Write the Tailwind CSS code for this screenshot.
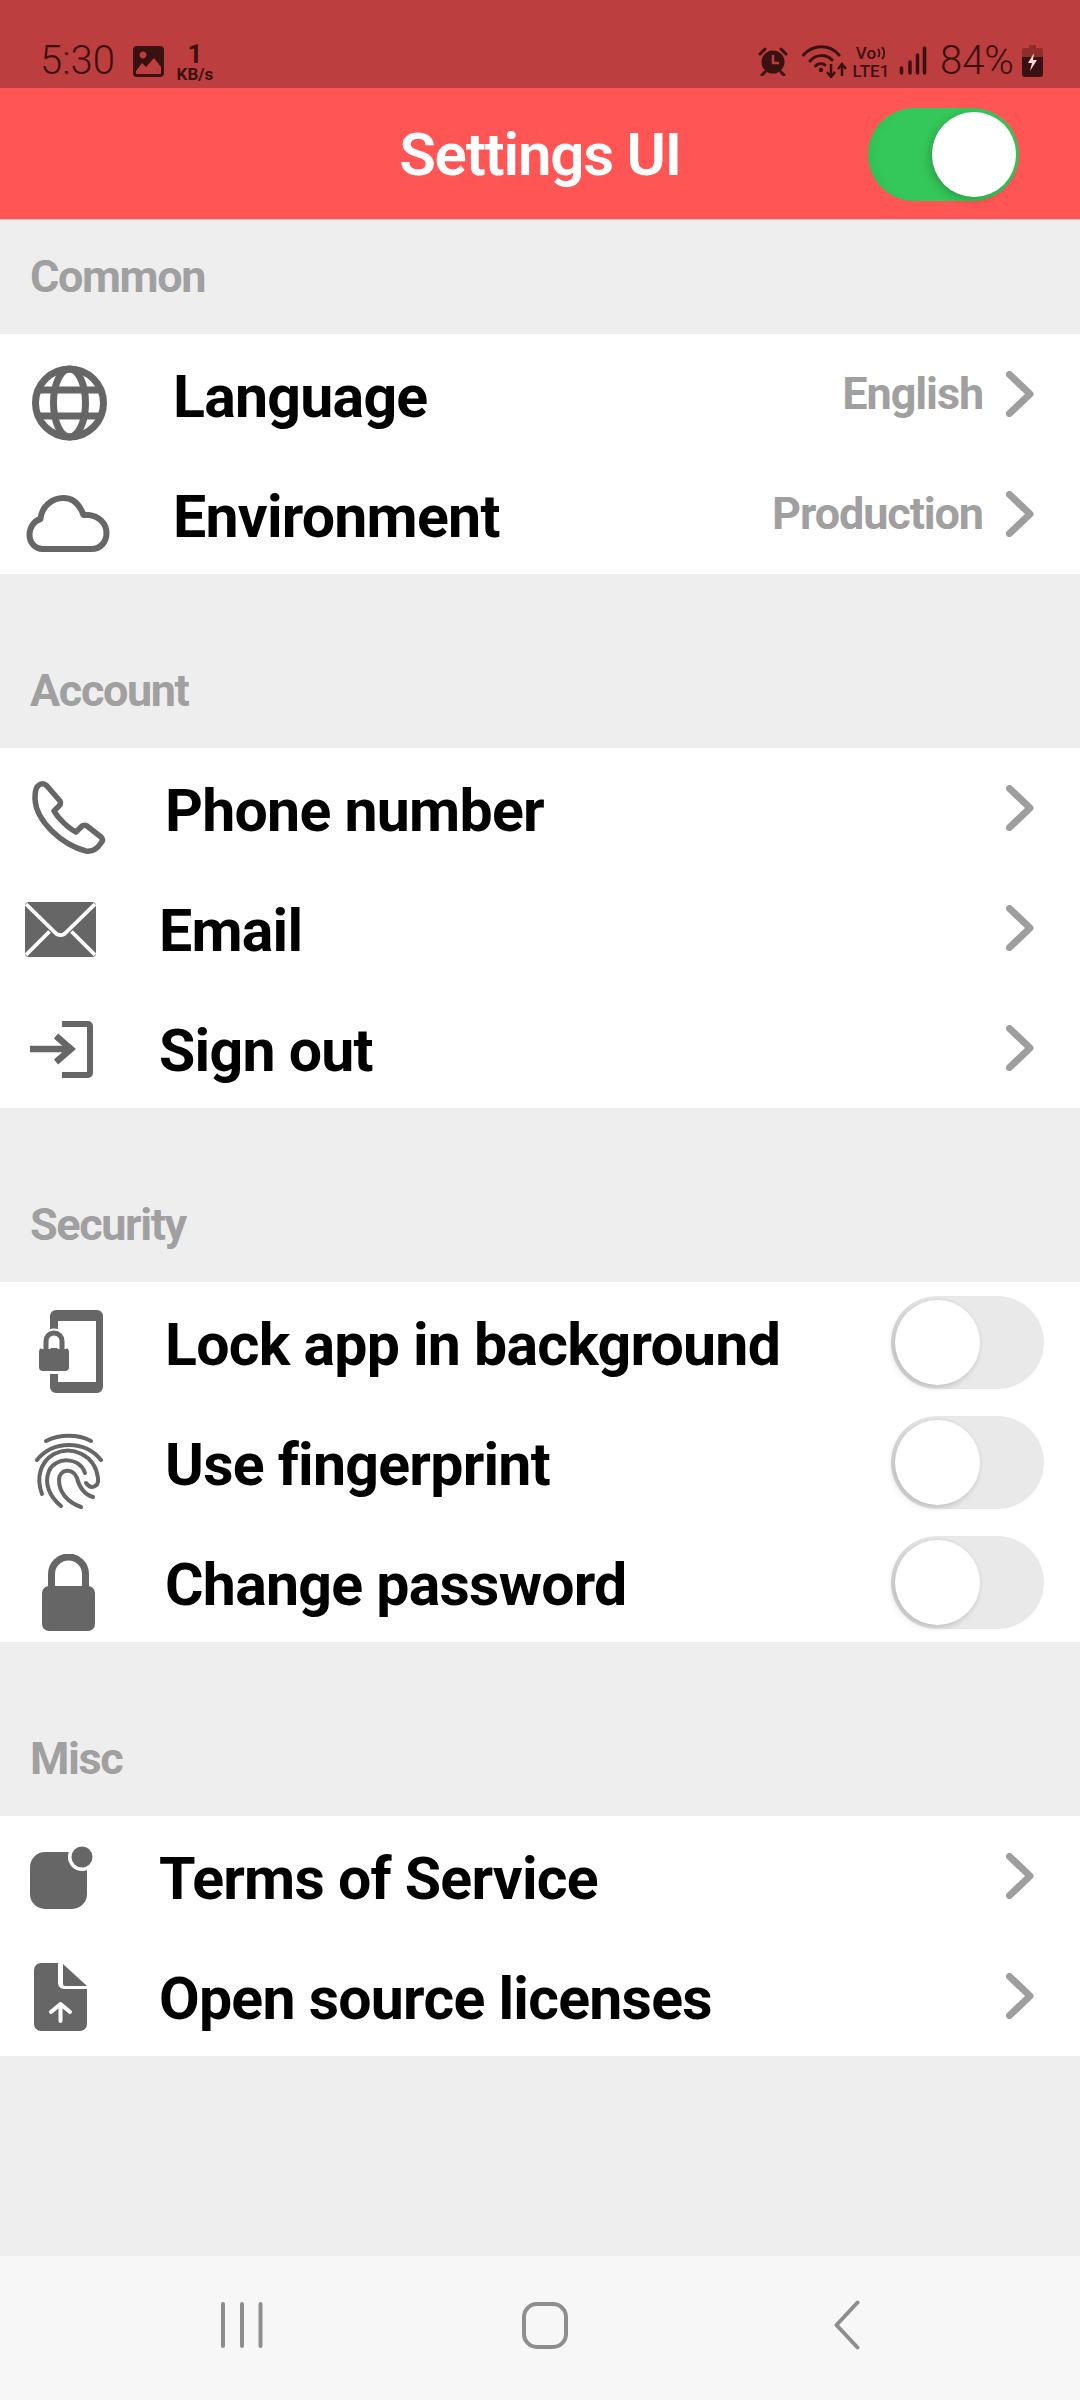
<!DOCTYPE html>
<html>
<head>
<meta charset="utf-8">
<script src="https://cdn.jsdelivr.net/npm/@tailwindcss/browser@4"></script>
</head>
<body class="m-0">
<div class="w-[1080px] h-[2400px] flex flex-col bg-[#eeeeee] font-['Roboto',sans-serif] overflow-hidden">
  <!-- status bar -->
  <div class="h-[88px] shrink-0 bg-[#bd3e3e] flex items-start text-[#3a1111] relative">
    <span class="ml-[40px] mt-[38px] text-[40px] leading-[46px] font-light">5:30</span>
    <svg class="ml-[18px] mt-[46px] block" width="31" height="31" viewBox="0 0 31 31"><path fill="#3a1111" fill-rule="evenodd" d="M4 0H27a4 4 0 0 1 4 4V27a4 4 0 0 1-4 4H4a4 4 0 0 1-4-4V4a4 4 0 0 1 4-4ZM3 25V27a1 1 0 0 0 1 1H27a1 1 0 0 0 1-1V21L21 12 13 21 9 17Z M10 5.500a3.500 3.500 0 1 0 .01 0Z"/></svg>
    <div class="ml-[10px] mt-[42px] w-[42px] flex flex-col items-center">
      <span class="text-[26px] leading-[24px] font-bold">1</span>
      <span class="text-[17px] leading-[17px] font-bold whitespace-nowrap">KB/s</span>
    </div>
    <svg class="ml-[542px] mt-[47px] block" width="30" height="29" viewBox="0 0 30 29"><circle cx="15" cy="15" r="11.500" fill="#3a1111"/><path d="M2 7 7 2M28 7 23 2M7 25 4 28M23 25 26 28" stroke="#3a1111" stroke-width="3" stroke-linecap="round"/><path d="M15 8V16H21" stroke="#bd3e3e" stroke-width="2.500" fill="none"/></svg>
    <svg class="ml-[14px] mt-[44px] block" width="45" height="34" viewBox="0 0 45 34"><g fill="none" stroke="#3a1111" stroke-width="3" stroke-linecap="round"><path d="M1.500 11C11 0 28 0 37 11"/><path d="M8 17C14 10 24 10 30 16"/><path d="M13.500 22C16 19.500 20 19 23 21"/></g><circle cx="19" cy="26" r="2.200" fill="#3a1111"/><path d="M29 20V32M25 28 29 33 33 28M40 32V21M36 25 40 20 44 25" fill="none" stroke="#3a1111" stroke-width="2.500"/></svg>
    <div class="ml-[5px] mt-[44px] w-[38px] flex flex-col items-center">
      <div class="flex items-center h-[17px]"><span class="text-[17px] leading-[16px] font-medium">Vo</span><svg class="block ml-[1px]" width="9" height="14" viewBox="0 0 9 14"><path d="M1 3C3 5 3 9 1 11M5 1C8 4 8 10 5 13" fill="none" stroke="#3a1111" stroke-width="1.800"/></svg></div>
      <span class="text-[17px] leading-[16px] font-medium mt-[2px] whitespace-nowrap">LTE1</span>
    </div>
    <svg class="ml-[9px] mt-[46px] block" width="28" height="29" viewBox="0 0 28 29"><path d="M2.500 22V27M11 16V27M18.500 9V27M25.500 2V27" stroke="#3a1111" stroke-width="3.500" stroke-linecap="round" fill="none"/></svg>
    <span class="ml-[13px] mt-[38px] text-[40px] leading-[46px] font-light whitespace-nowrap">84%</span>
    <svg class="ml-[8px] mt-[45px] block" width="21" height="32" viewBox="0 0 21 32"><path d="M7 0H14V3H19a2 2 0 0 1 2 2V13H0V5a2 2 0 0 1 2-2H7Z" fill="#8f2c2c"/><path d="M0 12H21V29a3 3 0 0 1-3 3H3a3 3 0 0 1-3-3Z" fill="#3a1111"/><path d="M12 8 6 18H10L8 26 15 15H11Z" fill="#f6d6d6"/></svg>
  </div>
  <!-- header -->
  <div class="h-[132px] shrink-0 bg-[#ff5555] border-b border-[#d0c0c0] flex items-center relative">
    <div class="w-full text-center text-white text-[60px] leading-[66px] font-semibold tracking-[-1.2px] mt-[2px]">Settings UI</div>
    <div class="absolute left-[868px] top-[20px] w-[151px] h-[93px] rounded-full bg-[#34c759] shadow-[inset_14px_0_14px_-14px_rgba(0,0,0,0.08)]">
      <div class="absolute left-[64px] top-[4px] w-[84px] h-[85px] rounded-full bg-white shadow-[-3px_3px_8px_rgba(0,0,0,0.18)]"></div>
    </div>
  </div>

  <!-- Common -->
  <div class="h-[114px] shrink-0 pl-[30px] flex items-center text-[#a0a0a0] text-[45px] font-bold tracking-[-1.4px]">Common</div>
  <div class="bg-white shrink-0">
    <div class="h-[120px] flex items-center">
      <div class="w-[173px] h-full shrink-0">
        <svg class="block ml-[32px] mt-[31px]" width="75" height="76" viewBox="0 0 75 76"><g fill="none" stroke="#666666" stroke-width="7"><circle cx="37.500" cy="38" r="34"/><ellipse cx="37.500" cy="38" rx="16" ry="34"/><path d="M7 25H68M7 51H68"/></g></svg>
      </div>
      <span class="text-[59px] font-bold tracking-[-0.75px] mt-[6px] text-black leading-[66px]">Language</span>
      <span class="ml-auto text-[45px] font-bold text-[#a0a0a0] leading-[52px] tracking-[-1.1px]">English</span>
      <svg class="block ml-[23px] mr-[46px]" width="28" height="46" viewBox="0 0 28 46"><path d="M3.500 3.500 24 23 3.500 42.500" fill="none" stroke="#9e9e9e" stroke-width="7" stroke-linecap="round" stroke-linejoin="round"/></svg>
    </div>
    <div class="h-[120px] flex items-center">
      <div class="w-[173px] h-full shrink-0">
        <svg class="block ml-[26px] mt-[41px]" width="85" height="58" viewBox="0 0 84 58"><path d="M16 54H65C74 54 80 47 80 38 80 28 72 21 62 20 L57 20C53 9 47 3 37 3 25 3 15 12 14 24 7 26 3 33 3 40 3 48 9 54 16 54Z" fill="none" stroke="#666666" stroke-width="6" stroke-linejoin="round"/></svg>
      </div>
      <span class="text-[59px] font-bold tracking-[-0.75px] mt-[6px] text-black leading-[66px]">Environment</span>
      <span class="ml-auto text-[45px] font-bold text-[#a0a0a0] leading-[52px] tracking-[-1.1px]">Production</span>
      <svg class="block ml-[23px] mr-[46px]" width="28" height="46" viewBox="0 0 28 46"><path d="M3.500 3.500 24 23 3.500 42.500" fill="none" stroke="#9e9e9e" stroke-width="7" stroke-linecap="round" stroke-linejoin="round"/></svg>
    </div>
  </div>

  <!-- Account -->
  <div class="h-[114px] mt-[60px] shrink-0 pl-[30px] flex items-center text-[#a0a0a0] text-[45px] font-bold tracking-[-1.4px]">Account</div>
  <div class="bg-white shrink-0">
    <div class="h-[120px] flex items-center">
      <div class="w-[165px] h-full shrink-0">
        <svg class="block ml-[32px] mt-[33px]" width="74" height="74" viewBox="0 0 74 74"><path d="M5 6C8 2 12 2 15 5L28 20C29 22 28 24 27 25L22 30C26 37 36 47 44 51L50 45C52 44 54 44 55 45L69 56C71 58 71 60 69 62 65 68 60 71 54 70 30 64 4 40 3 18 3 13 3 9 5 6Z" fill="none" stroke="#666666" stroke-width="5.500" stroke-linejoin="round"/></svg>
      </div>
      <span class="text-[59px] font-bold tracking-[-0.75px] mt-[6px] text-black leading-[66px]">Phone number</span>
      <svg class="block ml-auto mr-[46px]" width="28" height="46" viewBox="0 0 28 46"><path d="M3.500 3.500 24 23 3.500 42.500" fill="none" stroke="#9e9e9e" stroke-width="7" stroke-linecap="round" stroke-linejoin="round"/></svg>
    </div>
    <div class="h-[120px] flex items-center">
      <div class="w-[159px] h-full shrink-0">
        <svg class="block ml-[25px] mt-[34px]" width="71" height="55" viewBox="0 0 71 55"><rect width="71" height="55" rx="4" fill="#666666"/><path d="M1 2 30 30.500C33 34 38 34 41 30.500L70 2M1 53 24.500 29.500M70 53 46.500 29.500" fill="none" stroke="#ffffff" stroke-width="3.800"/></svg>
      </div>
      <span class="text-[59px] font-bold tracking-[-0.75px] mt-[6px] text-black leading-[66px]">Email</span>
      <svg class="block ml-auto mr-[46px]" width="28" height="46" viewBox="0 0 28 46"><path d="M3.500 3.500 24 23 3.500 42.500" fill="none" stroke="#9e9e9e" stroke-width="7" stroke-linecap="round" stroke-linejoin="round"/></svg>
    </div>
    <div class="h-[120px] flex items-center">
      <div class="w-[159px] h-full shrink-0">
        <svg class="block ml-[30px] mt-[33px]" width="64" height="57" viewBox="0 0 64 57"><path d="M32 3H58a2 2 0 0 1 2 2V52a2 2 0 0 1-2 2H32" fill="none" stroke="#666666" stroke-width="6"/><path d="M0 28H41M26 15 41 28 26 41" fill="none" stroke="#666666" stroke-width="6.500"/></svg>
      </div>
      <span class="text-[59px] font-bold tracking-[-0.75px] mt-[6px] text-black leading-[66px]">Sign out</span>
      <svg class="block ml-auto mr-[46px]" width="28" height="46" viewBox="0 0 28 46"><path d="M3.500 3.500 24 23 3.500 42.500" fill="none" stroke="#9e9e9e" stroke-width="7" stroke-linecap="round" stroke-linejoin="round"/></svg>
    </div>
  </div>

  <!-- Security -->
  <div class="h-[114px] mt-[60px] shrink-0 pl-[30px] flex items-center text-[#a0a0a0] text-[45px] font-bold tracking-[-1.4px]">Security</div>
  <div class="bg-white shrink-0">
    <div class="h-[120px] flex items-center">
      <div class="w-[165px] h-full shrink-0">
        <svg class="block ml-[39px] mt-[28px]" width="64" height="83" viewBox="0 0 64 83"><path d="M11 24V6a6 6 0 0 1 6-6H58a6 6 0 0 1 6 6V77a6 6 0 0 1-6 6H17a6 6 0 0 1-6-6V64H19V72H57V11H19V24Z" fill="#666666"/><rect y="38" width="30" height="23" rx="4" fill="#666666"/><path d="M7 39V31a8 8 0 0 1 16 0V39" fill="none" stroke="#ffffff" stroke-width="9"/><path d="M7 39V31a8 8 0 0 1 16 0V39" fill="none" stroke="#666666" stroke-width="5"/></svg>
      </div>
      <span class="text-[59px] font-bold tracking-[-0.75px] mt-[6px] text-black leading-[66px]">Lock app in background</span>
      <div class="ml-auto mr-[36px] relative w-[153px] h-[93px] rounded-full bg-[#e9e9e9] shadow-[inset_3px_0_3px_-1px_rgba(0,0,0,0.06)]">
        <div class="absolute left-[4px] top-[4px] w-[85px] h-[85px] rounded-full bg-white shadow-[-2px_2px_6px_rgba(0,0,0,0.22)]"></div>
      </div>
    </div>
    <div class="h-[120px] flex items-center">
      <div class="w-[165px] h-full shrink-0">
        <svg class="block ml-[35px] mt-[31px]" width="68" height="76" viewBox="0 0 68 76"><g fill="none" stroke="#666666" stroke-width="4" stroke-linecap="round"><path d="M11 8C25 1 43 1 56 8"/><path d="M2 27C18 7 50 7 66 27"/><path d="M7 61C1 45 5 29 19 21 37 12 60 22 63 45 64 54 56 57 51 50"/><path d="M26 73C14 63 9 50 14 38 20 24 44 23 50 40"/><path d="M46 74C32 69 24 59 24 47 24 36 38 34 42 45 44 54 50 62 58 64"/></g></svg>
      </div>
      <span class="text-[59px] font-bold tracking-[-0.75px] mt-[6px] text-black leading-[66px]">Use fingerprint</span>
      <div class="ml-auto mr-[36px] relative w-[153px] h-[93px] rounded-full bg-[#e9e9e9] shadow-[inset_3px_0_3px_-1px_rgba(0,0,0,0.06)]">
        <div class="absolute left-[4px] top-[4px] w-[85px] h-[85px] rounded-full bg-white shadow-[-2px_2px_6px_rgba(0,0,0,0.22)]"></div>
      </div>
    </div>
    <div class="h-[120px] flex items-center">
      <div class="w-[165px] h-full shrink-0">
        <svg class="block ml-[42px] mt-[32px]" width="53" height="77" viewBox="0 0 53 77"><path d="M9.500 34V20a17 17 0 0 1 34 0V34" fill="none" stroke="#666666" stroke-width="7"/><rect y="32" width="53" height="45" rx="7" fill="#666666"/></svg>
      </div>
      <span class="text-[59px] font-bold tracking-[-0.75px] mt-[6px] text-black leading-[66px]">Change password</span>
      <div class="ml-auto mr-[36px] relative w-[153px] h-[93px] rounded-full bg-[#e9e9e9] shadow-[inset_3px_0_3px_-1px_rgba(0,0,0,0.06)]">
        <div class="absolute left-[4px] top-[4px] w-[85px] h-[85px] rounded-full bg-white shadow-[-2px_2px_6px_rgba(0,0,0,0.22)]"></div>
      </div>
    </div>
  </div>

  <!-- Misc -->
  <div class="h-[114px] mt-[60px] shrink-0 pl-[30px] flex items-center text-[#a0a0a0] text-[45px] font-bold tracking-[-1.4px]">Misc</div>
  <div class="bg-white shrink-0">
    <div class="h-[120px] flex items-center">
      <div class="w-[159px] h-full shrink-0">
        <svg class="block ml-[30px] mt-[30px]" width="64" height="64" viewBox="0 0 64 64"><rect y="6" width="57" height="57" rx="15" fill="#666666"/><circle cx="52" cy="11" r="14" fill="#ffffff"/><circle cx="52" cy="11" r="10.500" fill="#666666"/></svg>
      </div>
      <span class="text-[59px] font-bold tracking-[-0.75px] mt-[6px] text-black leading-[66px]">Terms of Service</span>
      <svg class="block ml-auto mr-[46px]" width="28" height="46" viewBox="0 0 28 46"><path d="M3.500 3.500 24 23 3.500 42.500" fill="none" stroke="#9e9e9e" stroke-width="7" stroke-linecap="round" stroke-linejoin="round"/></svg>
    </div>
    <div class="h-[120px] flex items-center">
      <div class="w-[159px] h-full shrink-0">
        <svg class="block ml-[34px] mt-[27px]" width="53" height="68" viewBox="0 0 53 68"><path d="M7 0H24V20a6 6 0 0 0 6 6H53V61a7 7 0 0 1-7 7H7a7 7 0 0 1-7-7V7a7 7 0 0 1 7-7Z" fill="#666666"/><path d="M29 1 53 23H31a2 2 0 0 1-2-2Z" fill="#666666"/><path d="M26.500 58V42M17 49 26.500 41 36 49" fill="none" stroke="#ffffff" stroke-width="4" stroke-linecap="round" stroke-linejoin="round"/></svg>
      </div>
      <span class="text-[59px] font-bold tracking-[-0.75px] mt-[6px] text-black leading-[66px]">Open source licenses</span>
      <svg class="block ml-auto mr-[46px]" width="28" height="46" viewBox="0 0 28 46"><path d="M3.500 3.500 24 23 3.500 42.500" fill="none" stroke="#9e9e9e" stroke-width="7" stroke-linecap="round" stroke-linejoin="round"/></svg>
    </div>
  </div>

  <div class="flex-1"></div>
  <!-- nav -->
  <div class="h-[144px] shrink-0 bg-[#f7f7f7] flex items-start">
    <svg class="block ml-[221px] mt-[46px]" width="42" height="46" viewBox="0 0 42 46"><path d="M2 2V44M21 2V44M39.500 2V44" stroke="#8e8e8e" stroke-width="4" stroke-linecap="round"/></svg>
    <svg class="block ml-[259px] mt-[46px]" width="46" height="47" viewBox="0 0 46 47"><rect x="2" y="2" width="42" height="43" rx="13" fill="none" stroke="#8e8e8e" stroke-width="4"/></svg>
    <svg class="block ml-[266px] mt-[44px]" width="26" height="50" viewBox="0 0 26 50"><path d="M23.500 2.500 2.500 25 23.500 47.500" fill="none" stroke="#8e8e8e" stroke-width="4" stroke-linecap="round" stroke-linejoin="round"/></svg>
  </div>
</div>
</body>
</html>
